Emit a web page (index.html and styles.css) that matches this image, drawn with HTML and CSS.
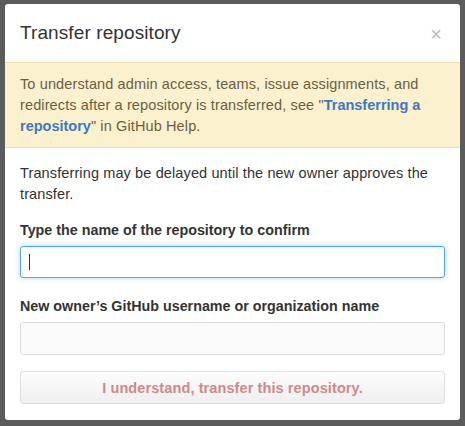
FILE: index.html
```html
<!DOCTYPE html>
<html>
<head>
<meta charset="utf-8">
<link rel="stylesheet" href="styles.css">
</head>
<body>
<div class="backdrop">
  <div class="dialog">
    <div class="dialog-header">
      <h2 class="dialog-title">Transfer repository</h2>
      <span class="close">&#215;</span>
    </div>
    <div class="flash-warn">
      To understand admin access, teams, issue assignments, and redirects after a repository is transferred, see "<a class="link" href="#">Transferring a repository</a>" in GitHub Help.
    </div>
    <div class="dialog-body">
      <p class="note">Transferring may be delayed until the new owner approves the transfer.</p>
      <label class="label">Type the name of the repository to confirm</label>
      <div class="input input-focus"><span class="caret"></span></div>
      <label class="label">New owner’s GitHub username or organization name</label>
      <div class="input input-muted"></div>
      <div class="btn">I understand, transfer this repository.</div>
    </div>
  </div>
</div>
</body>
</html>
```
FILE: styles.css
```css
html, body {
  margin: 0;
  padding: 0;
  height: 100%;
}
body {
  background: #5b5b5b;
  font-family: "Liberation Sans", Arial, sans-serif;
  font-size: 14.5px;
  letter-spacing: 0.12px;
  color: #333;
}
.backdrop {
  padding: 4px 5px 0 5px;
}
.dialog {
  background: #fff;
  border-radius: 3px;
  width: 455px;
  height: 416px;
  box-sizing: border-box;
  overflow: hidden;
}
.dialog-header {
  display: flex;
  align-items: center;
  justify-content: space-between;
  height: 58px;
  padding: 0 15px;
}
.dialog-title {
  margin: 0;
  font-size: 19px;
  font-weight: normal;
  letter-spacing: 0.1px;
  color: #333;
}
.close {
  color: #bdbdbd;
  font-size: 20px;
  margin-right: 3px;
  margin-top: 2px;
}
.flash-warn {
  background: #fbf1cf;
  border-top: 1px solid #eedfaf;
  border-bottom: 1px solid #eedfaf;
  color: #6b5f3f;
  padding: 11px 15px 10px 15px;
  line-height: 21px;
}
.link {
  color: #4078c0;
  font-weight: bold;
  letter-spacing: 0;
  text-decoration: none;
}
.dialog-body {
  padding: 15px;
}
.note {
  margin: 0 0 15px 0;
  line-height: 21px;
}
.label {
  display: block;
  font-weight: bold;
  font-size: 14.3px;
  letter-spacing: 0;
  line-height: 21px;
  margin-bottom: 5px;
}
.input {
  height: 32px;
  box-sizing: border-box;
  border: 1px solid #ddd;
  border-radius: 3px;
  display: flex;
  align-items: center;
  padding-left: 8px;
}
.input-focus {
  border-color: #51a7e8;
  box-shadow: inset 0 1px 2px rgba(0,0,0,0.075), 0 0 5px rgba(81,167,232,0.5);
  margin-bottom: 18px;
}
.input-muted {
  background: #fafafa;
  height: 33px;
  margin-bottom: 16px;
}
.caret {
  width: 1px;
  height: 16px;
  background: #333;
}
.btn {
  height: 33px;
  box-sizing: border-box;
  border: 1px solid #e1e1e1;
  border-radius: 3px;
  background: linear-gradient(#fcfcfc, #efefef);
  color: #cd8a8a;
  font-weight: bold;
  letter-spacing: 0.1px;
  display: flex;
  align-items: center;
  justify-content: center;
}
```
